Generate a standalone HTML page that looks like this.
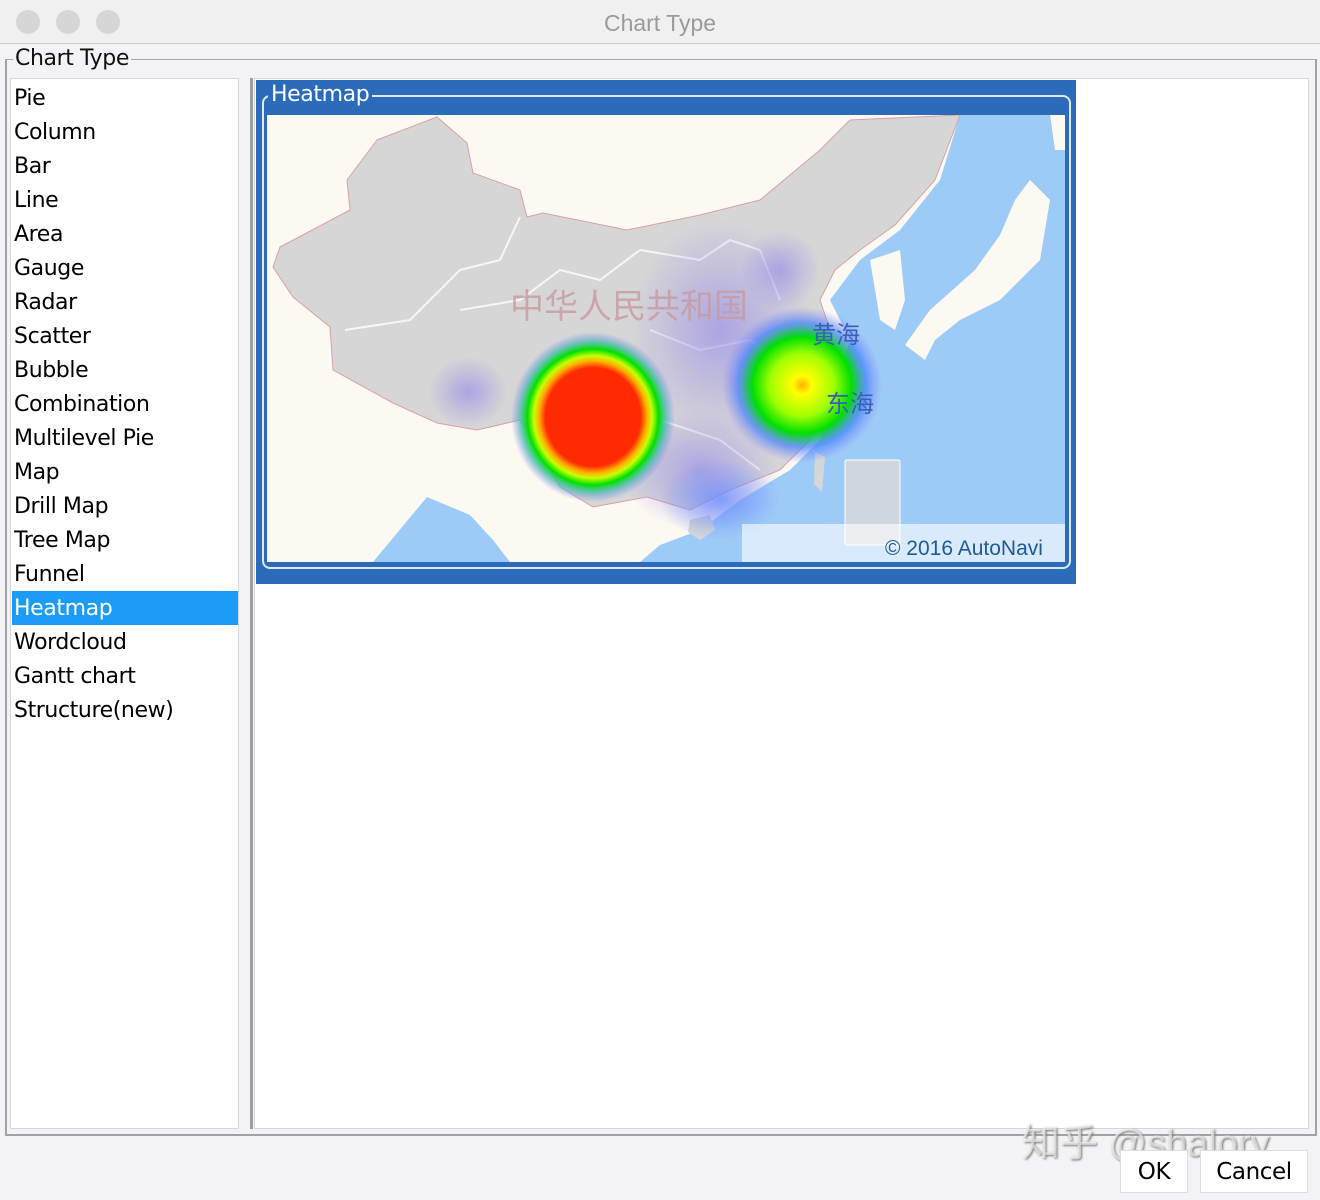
<!DOCTYPE html>
<html><head><meta charset="utf-8"><style>
*{margin:0;padding:0;box-sizing:border-box}
body{width:1320px;height:1200px;background:#f3f3f5;font-family:"DejaVu Sans","Liberation Sans",sans-serif;position:relative;overflow:hidden}
.abs{position:absolute}
.title{left:0;top:0;width:1320px;height:44px;background:#f0f0f0;border-bottom:1px solid #cfcfcf;text-align:center;color:#9a9a9a;font-size:23px;line-height:46px;font-family:"Liberation Sans",sans-serif}
.dot{top:10px;width:24px;height:24px;border-radius:50%;background:#d6d6d6}
.group{left:5px;top:59px;width:1312px;height:1077px;border:2px solid #a2a2a2;border-top:1px solid #a8a8a8}
.glabel{left:13px;top:46px;background:#f3f3f5;padding:0 2px;font-size:22px;letter-spacing:-0.4px;color:#111}
.list{left:10px;top:78px;width:229px;height:1051px;background:#fff;border:1px solid #d6d6da}
.item{position:absolute;left:1px;width:226px;height:34px;font-size:22px;letter-spacing:-0.4px;line-height:36px;padding-left:2px;color:#000}
.sel{background:#1a9cf7;color:#fff}
.div{left:250px;top:78px;width:3px;height:1051px;background:#9d9d9d}
.right{left:254px;top:78px;width:1055px;height:1051px;background:#fff;border:1px solid #d6d6da}
.btn{top:1150px;height:43px;background:#fff;border:1px solid #ddd;font-size:23px;letter-spacing:-0.4px;text-align:center;line-height:43px;color:#000}
.wm{left:1022px;top:1112px;font-size:38px;color:rgba(255,255,255,.6);text-shadow:1px 1px 2px #777;font-family:"Liberation Sans","Noto Sans CJK SC",sans-serif}
</style></head><body>
<div class="abs title">Chart Type</div>
<div class="abs dot" style="left:16px"></div>
<div class="abs dot" style="left:56px"></div>
<div class="abs dot" style="left:96px"></div>
<div class="abs group"></div>
<div class="abs glabel">Chart Type</div>
<div class="abs list">
<div class="item" style="top:2px">Pie</div>
<div class="item" style="top:36px">Column</div>
<div class="item" style="top:70px">Bar</div>
<div class="item" style="top:104px">Line</div>
<div class="item" style="top:138px">Area</div>
<div class="item" style="top:172px">Gauge</div>
<div class="item" style="top:206px">Radar</div>
<div class="item" style="top:240px">Scatter</div>
<div class="item" style="top:274px">Bubble</div>
<div class="item" style="top:308px">Combination</div>
<div class="item" style="top:342px">Multilevel Pie</div>
<div class="item" style="top:376px">Map</div>
<div class="item" style="top:410px">Drill Map</div>
<div class="item" style="top:444px">Tree Map</div>
<div class="item" style="top:478px">Funnel</div>
<div class="item sel" style="top:512px">Heatmap</div>
<div class="item" style="top:546px">Wordcloud</div>
<div class="item" style="top:580px">Gantt chart</div>
<div class="item" style="top:614px">Structure(new)</div>
</div>
<div class="abs div"></div>
<div class="abs right"></div>
<div class="abs" style="left:256px;top:80px;width:820px;height:504px;background:#2b6bb9"></div>
<div class="abs" style="left:262px;top:95px;width:809px;height:474px;border:2px solid #dfe8f5;border-radius:8px"></div>
<div class="abs" style="left:268px;top:82px;background:#2b6bb9;padding:0 3px;color:#fff;font-size:22px;letter-spacing:-0.4px">Heatmap</div>
<svg class="abs" style="left:267px;top:115px" width="798" height="447" viewBox="267 115 798 447">
<defs>
<radialGradient id="r1"><stop offset="0" stop-color="#ff2a00"/><stop offset=".58" stop-color="#ff2a00"/><stop offset=".66" stop-color="#ffb000"/><stop offset=".72" stop-color="#c8ff00"/><stop offset=".8" stop-color="#00e000"/><stop offset=".88" stop-color="#40c0a0" stop-opacity=".8"/><stop offset="1" stop-color="#8080ff" stop-opacity="0"/></radialGradient>
<radialGradient id="r2"><stop offset="0" stop-color="#ffb000"/><stop offset=".12" stop-color="#ffff00"/><stop offset=".4" stop-color="#a0ff00"/><stop offset=".62" stop-color="#00e000"/><stop offset=".8" stop-color="#4080ff" stop-opacity=".7"/><stop offset="1" stop-color="#8080ff" stop-opacity="0"/></radialGradient>
<radialGradient id="hz"><stop offset="0" stop-color="#9a8fe8" stop-opacity=".7"/><stop offset="1" stop-color="#9a8fe8" stop-opacity="0"/></radialGradient>
<radialGradient id="hb"><stop offset="0" stop-color="#6a8cff" stop-opacity=".8"/><stop offset="1" stop-color="#6a8cff" stop-opacity="0"/></radialGradient>
</defs>
<rect x="267" y="115" width="798" height="447" fill="#fcf8f2"/>
<path d="M960 115 L940 180 L900 230 L860 260 L830 300 L850 340 L835 390 L820 440 L790 470 L740 500 L700 530 L660 545 L640 562 L1065 562 L1065 115Z" fill="#9dcbf7"/>
<path d="M373 562 L427 497 L470 515 L493 540 L510 562Z" fill="#9dcbf7"/>
<path d="M1030 180 L1050 200 L1040 260 L1000 300 L960 320 L935 340 L925 360 L905 345 L930 310 L975 270 L1000 235 L1015 200Z" fill="#fcf8f2"/>
<path d="M1050 115 L1065 115 L1065 150 L1055 150Z" fill="#fcf8f2"/>
<path d="M870 260 L900 250 L905 300 L895 330 L880 320 L875 290Z" fill="#fcf8f2"/>
<path d="M377 140 L437 117 L467 143 L473 173 L520 190 L527 217 L543 213 L627 230 L700 215 L760 200 L820 150 L850 120 L960 115 L935 180 L895 225 L860 250 L835 270 L820 300 L830 330 L820 380 L810 440 L780 470 L730 490 L690 510 L647 497 L593 507 L560 487 L520 420 L477 430 L437 423 L393 403 L333 370 L330 327 L293 297 L273 267 L280 247 L350 210 L347 180Z" fill="#d6d6d6" stroke="#d9a0a8" stroke-width="1"/>
<path d="M690 520 l20 -5 5 15 -15 10 -12 -8z" fill="#d6d6d6"/>
<path d="M815 452 l10 5 -3 35 -8 -8z" fill="#d6d6d6"/>
<rect x="845" y="460" width="55" height="85" fill="#d0d6de" stroke="#fff" rx="2"/>
<g fill="none" stroke="#fff" stroke-width="2" opacity=".8">
<path d="M460 310 L520 300 L560 270 L600 280 L640 250"/>
<path d="M520 217 L500 260 L460 270 L410 320 L345 330"/>
<path d="M640 250 L700 260 L730 240 L760 250 L780 300"/>
<path d="M650 330 L700 350 L750 340 L780 360"/>
<path d="M660 420 L720 440 L760 470"/>
</g>
<ellipse cx="720" cy="330" rx="90" ry="110" fill="url(#hz)"/>
<ellipse cx="700" cy="470" rx="80" ry="60" fill="url(#hz)"/>
<ellipse cx="468" cy="392" rx="40" ry="35" fill="url(#hz)"/>
<ellipse cx="780" cy="270" rx="40" ry="40" fill="url(#hz)"/>
<ellipse cx="720" cy="500" rx="60" ry="40" fill="url(#hb)"/>
<ellipse cx="593" cy="417" rx="82" ry="85" fill="url(#r1)"/>
<ellipse cx="802" cy="385" rx="80" ry="78" fill="url(#r2)"/>
<text x="510" y="318" font-size="34" fill="#c89aa0" opacity=".8" font-family="Noto Sans CJK SC,sans-serif">中华人民共和国</text>
<text x="812" y="343" font-size="24" fill="#3a5fb8" font-family="Noto Sans CJK SC,sans-serif">黄海</text>
<text x="826" y="412" font-size="24" fill="#3a5fb8" font-family="Noto Sans CJK SC,sans-serif">东海</text>
<rect x="742" y="524" width="323" height="38" fill="#fff" opacity=".6"/>
<text x="885" y="555" font-size="21" fill="#1e5a9a" font-family="Liberation Sans,sans-serif">© 2016 AutoNavi</text>
</svg>
<div class="abs wm">知乎 @shalory</div>
<div class="abs btn" style="left:1120px;width:68px">OK</div>
<div class="abs btn" style="left:1200px;width:108px">Cancel</div>
</body></html>
